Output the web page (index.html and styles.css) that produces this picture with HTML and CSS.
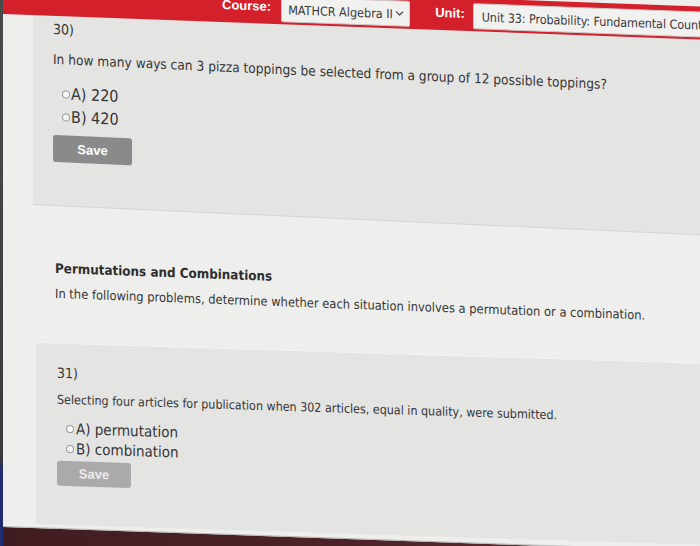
FILE: index.html
```html
<!DOCTYPE html>
<html lang="en">
<head>
<meta charset="utf-8">
<title>Quiz</title>
<link rel="stylesheet" href="styles.css">
</head>
<body>
<div class="screen">
  <header class="topbar">
    <span class="bar-label label-course">Course:</span>
    <span class="select select-course">MATHCR Algebra II<svg class="chev" width="9" height="6" viewBox="0 0 9 6"><polyline points="1,1 4.5,4.5 8,1" fill="none" stroke="#555" stroke-width="1.3"/></svg></span>
    <span class="bar-label label-unit">Unit:</span>
    <span class="select select-unit">Unit 33: Probability: Fundamental Counting Principle</span>
  </header>

  <section class="card card-q30">
    <p class="qnum">30)</p>
    <p class="qtext">In how many ways can 3 pizza toppings be selected from a group of 12 possible toppings?</p>
    <ul class="options">
      <li><span class="radio"></span>A) 220</li>
      <li><span class="radio"></span>B) 420</li>
    </ul>
    <button class="save">Save</button>
  </section>

  <section class="intro">
    <h2 class="intro-title">Permutations and Combinations</h2>
    <p class="intro-text">In the following problems, determine whether each situation involves a permutation or a combination.</p>
  </section>

  <section class="card card-q31">
    <p class="qnum">31)</p>
    <p class="qtext">Selecting four articles for publication when 302 articles, equal in quality, were submitted.</p>
    <ul class="options">
      <li><span class="radio"></span>A) permutation</li>
      <li><span class="radio"></span>B) combination</li>
    </ul>
    <button class="save save-light">Save</button>
  </section>

  <footer class="bezel"></footer>
</div>
</body>
</html>
```

FILE: styles.css
```css
html, body {
  margin: 0;
  padding: 0;
  background: #eeeeec;
}

.screen {
  width: 697px;
  height: 546px;
  overflow: hidden;
  border-left: 3px solid #3d3d3d;
  border-image: linear-gradient(#4a4a4a 0%, #3a3a3a 84%, #1f2c6e 86%, #1f2c6e 100%) 1;
  background: #eeeeec;
  font-family: "DejaVu Sans", "Liberation Sans", sans-serif;
  font-stretch: condensed;
  color: #363636;
}

/* ---------- top bar ---------- */
.topbar {
  position: relative;
  z-index: 2;
  box-sizing: border-box;
  height: 33px;
  margin-top: -19px;
  padding: 0 0 2px 219px;
  background: #d4202b;
  display: flex;
  align-items: flex-end;
  transform: skewY(2.1deg);
  transform-origin: 0 0;
  white-space: nowrap;
}

.bar-label {
  color: #ffffff;
  font-family: "Liberation Sans", sans-serif;
  font-weight: bold;
  font-size: 13px;
  line-height: 16px;
  margin-bottom: 7px;
}

.label-course { margin-right: 10px; }
.label-unit { margin-left: 25px; margin-right: 8px; }

.select {
  box-sizing: border-box;
  height: 26px;
  display: flex;
  align-items: center;
  padding: 0 5px 0 6px;
  background: #f1f1f0;
  border: 1px solid #c9c9c9;
  border-radius: 2px;
  font-size: 12.5px;
  color: #3a3a3a;
  flex-shrink: 0;
  overflow: hidden;
}

.select-course {
  width: 129px;
  justify-content: space-between;
}

.select-unit {
  width: 300px;
  padding-left: 8px;
  letter-spacing: -0.1px;
}

.chev { flex-shrink: 0; }

/* ---------- cards ---------- */
.card {
  background: #e4e4e2;
  transform-origin: 0 0;
}

.card p { margin: 0; }

.qnum {
  font-size: 14px;
  line-height: 18px;
}

.qtext {
  line-height: 18px;
}

.options {
  list-style: none;
  margin: 0;
  padding: 0;
}

.options li {
  display: flex;
  align-items: center;
}

.radio {
  box-sizing: border-box;
  width: 8px;
  height: 8px;
  border: 1px solid #9a9a9a;
  border-radius: 50%;
  background: #f7f7f7;
  margin-right: 1px;
  flex-shrink: 0;
}

.save {
  display: block;
  border: 0;
  border-radius: 3px;
  background: #8a8a8a;
  color: #ffffff;
  font-family: "Liberation Sans", sans-serif;
  font-weight: bold;
  font-size: 13px;
  padding: 0;
}

.save-light {
  background: #aaaaaa;
  color: #ececec;
}

/* question 30 */
.card-q30 {
  position: relative;
  z-index: 1;
  margin: -6px 0 0 30px;
  padding: 11px 0 43px 20px;
  transform: skewY(2.6deg);
  border-bottom: 1px solid #d6d6d4;
}

.card-q30 .qtext {
  margin-top: 12px;
  font-size: 13.6px;
}

.card-q30 .options {
  margin: 14px 0 0 9px;
  font-size: 16px;
  line-height: 23px;
}

.card-q30 .save {
  margin-top: 7px;
  width: 79px;
  height: 27px;
}

/* intro */
.intro {
  padding: 53px 0 0 52px;
  transform: skewY(2.1deg);
  transform-origin: 0 0;
}

.intro-title {
  margin: 0;
  font-size: 13.3px;
  line-height: 18px;
  font-weight: bold;
  color: #2e2e2e;
}

.intro-text {
  margin: 7px 0 0;
  font-size: 12.8px;
  line-height: 18px;
}

/* question 31 */
.card-q31 {
  margin: 41px 0 0 33px;
  padding: 20px 0 39px 21px;
  transform: skewY(1.8deg);
  border-top: 1px solid #f4f4f3;
}

.card-q31 .qtext {
  margin-top: 9px;
  font-size: 12.4px;
}

.card-q31 .options {
  margin: 10px 0 0 9px;
  font-size: 15px;
  line-height: 20px;
}

.card-q31 .radio {
  margin-right: 2px;
}

.card-q31 .save {
  margin-top: 2px;
  width: 74px;
  height: 25px;
}

/* bottom bezel */
.bezel {
  height: 40px;
  margin-top: 2px;
  background: linear-gradient(90deg, #3f1c20 0%, #4e2327 50%, #5a3034 100%);
  border-top: 1px solid #b9b7b6;
  transform: skewY(2deg);
  transform-origin: 0 0;
}
```
